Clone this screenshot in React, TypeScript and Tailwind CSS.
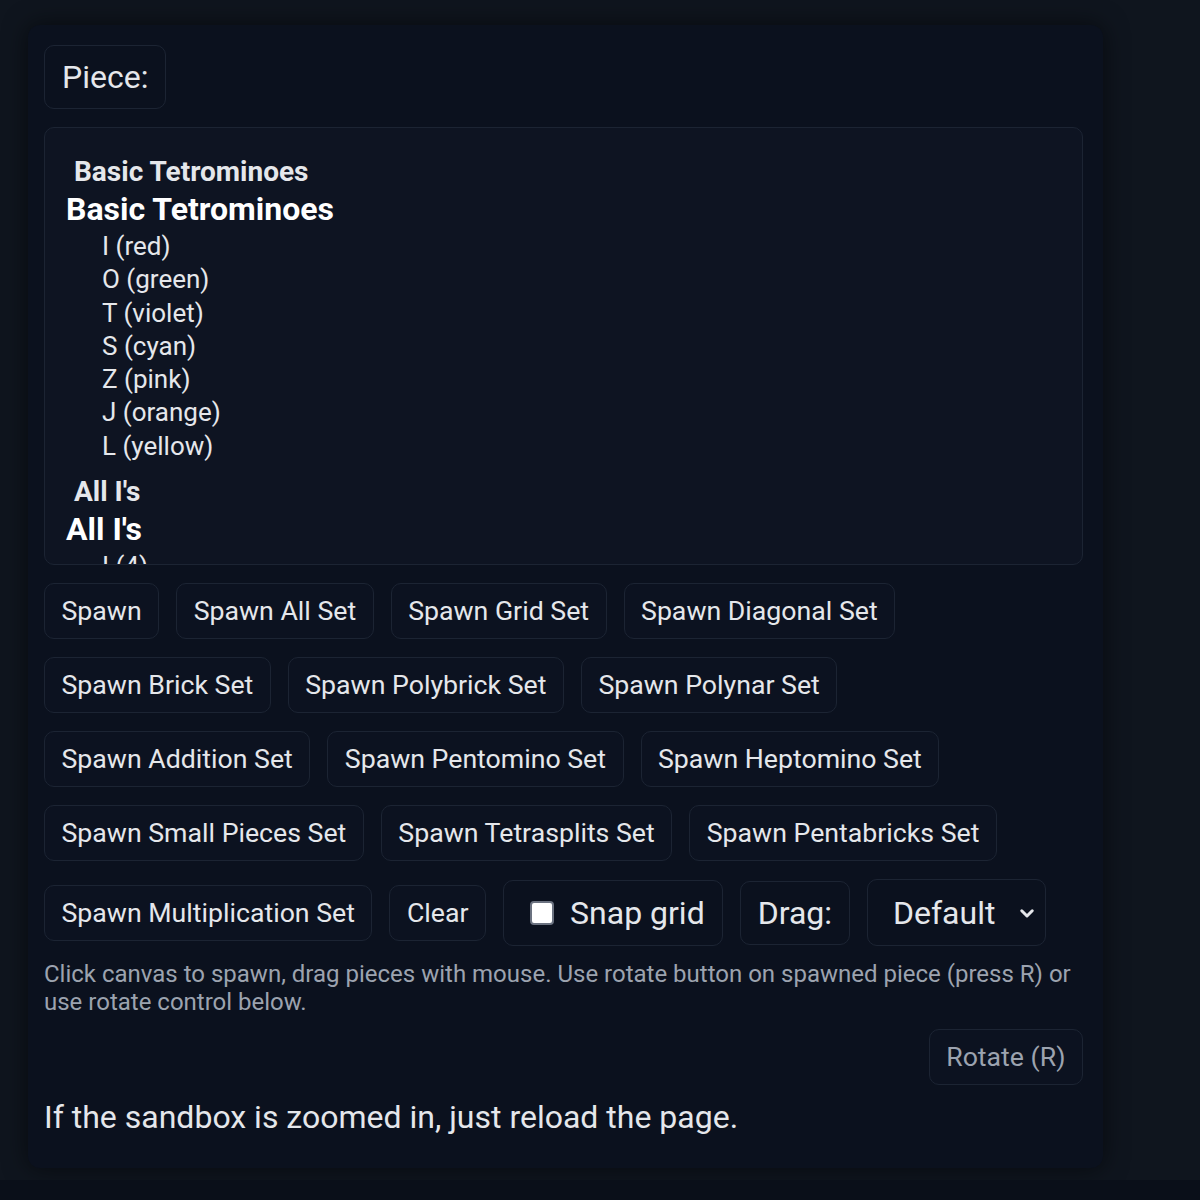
const groups = [
  {
    name: "Basic Tetrominoes",
    items: ["I (red)", "O (green)", "T (violet)", "S (cyan)", "Z (pink)", "J (orange)", "L (yellow)"],
  },
  { name: "All I's", items: ["I (4)"] },
]

const rows = [
  ["Spawn", "Spawn All Set", "Spawn Grid Set", "Spawn Diagonal Set"],
  ["Spawn Brick Set", "Spawn Polybrick Set", "Spawn Polynar Set"],
  ["Spawn Addition Set", "Spawn Pentomino Set", "Spawn Heptomino Set"],
  ["Spawn Small Pieces Set", "Spawn Tetrasplits Set", "Spawn Pentabricks Set"],
]

function Btn({ label, muted }: { label: string; muted?: boolean }) {
  return (
    <button
      className={`h-[56px] px-[16.5px] pt-[1px] rounded-[10px] border border-[#1c2433] bg-[#0c1220] text-[26.7px] leading-none ${
        muted ? "text-[#9ca3af]" : "text-[#e5e7eb]"
      }`}
    >
      {label}
    </button>
  )
}

export default function App() {
  return (
    <div className="min-h-[1200px] bg-[#0f151e] font-['Roboto',sans-serif]">
      <div className="h-[1180px] pt-[25px] pl-[28px]">
        <div className="w-[1075px] h-[1143px] rounded-xl bg-[#0b111e] shadow-[0_0_24px_rgba(0,0,0,0.55)] pt-[20px] pl-[16px] pr-[20px]">
          <div className="inline-flex h-[64px] items-center px-[17px] rounded-[10px] border border-[#1c2433] text-[32px] text-[#e5e7eb]">
            Piece:
          </div>

          <div className="mt-[18px] h-[438px] overflow-hidden rounded-[10px] border border-[#1c2433] bg-[#0e1422] pt-[27px]">
            {groups.map((g, i) => (
              <div key={g.name} className={i > 0 ? "mt-[12px]" : ""}>
                <div className="pl-[29px] text-[28px] leading-[34px] font-bold text-[#e5e7eb]">{g.name}</div>
                <div className="pl-[21px] text-[32px] leading-[41px] font-bold text-white">{g.name}</div>
                {g.items.map((it) => (
                  <div key={it} className="pl-[57px] text-[26px] leading-[33.3px] text-[#e5e7eb]">
                    {it}
                  </div>
                ))}
              </div>
            ))}
          </div>

          <div className="mt-[18px] flex flex-col gap-[18px]">
            {rows.map((r, i) => (
              <div key={i} className="flex gap-[17px]">
                {r.map((b) => (
                  <Btn key={b} label={b} />
                ))}
              </div>
            ))}
            <div className="flex items-center gap-[17px]">
              <Btn label="Spawn Multiplication Set" />
              <Btn label="Clear" />
              <label className="flex h-[66px] items-center gap-[16px] pl-[26px] pr-[17px] rounded-[10px] border border-[#1c2433] text-[32px] text-[#e5e7eb]">
                <span className="block w-[24px] h-[24px] rounded-[4px] bg-white border-2 border-[#6b7280]" />
                Snap grid
              </label>
              <div className="flex h-[64px] items-center px-[17px] rounded-[10px] border border-[#1c2433] text-[32px] text-[#e5e7eb]">
                Drag:
              </div>
              <div className="flex h-[67px] w-[179px] items-center justify-between pl-[25px] pr-[9px] rounded-[10px] border border-[#1c2433] text-[32px] text-[#e5e7eb]">
                Default
                <svg width="18" height="18" viewBox="0 0 24 24" fill="none" stroke="#e5e7eb" strokeWidth="4" strokeLinecap="round" strokeLinejoin="round">
                  <path d="M5 9l7 7 7-7" />
                </svg>
              </div>
            </div>
          </div>

          <p className="mt-[14px] text-[24px] leading-[28px] text-[#9ca3af]">
            Click canvas to spawn, drag pieces with mouse. Use rotate button on spawned piece (press R) or use rotate
            control below.
          </p>

          <div className="mt-[13px] flex justify-end">
            <Btn label="Rotate (R)" muted />
          </div>

          <p className="mt-[13px] text-[32px] leading-[38px] text-[#e5e7eb]">
            If the sandbox is zoomed in, just reload the page.
          </p>
        </div>
      </div>
      <div className="h-[20px] bg-[#0a0f19]" />
    </div>
  )
}
